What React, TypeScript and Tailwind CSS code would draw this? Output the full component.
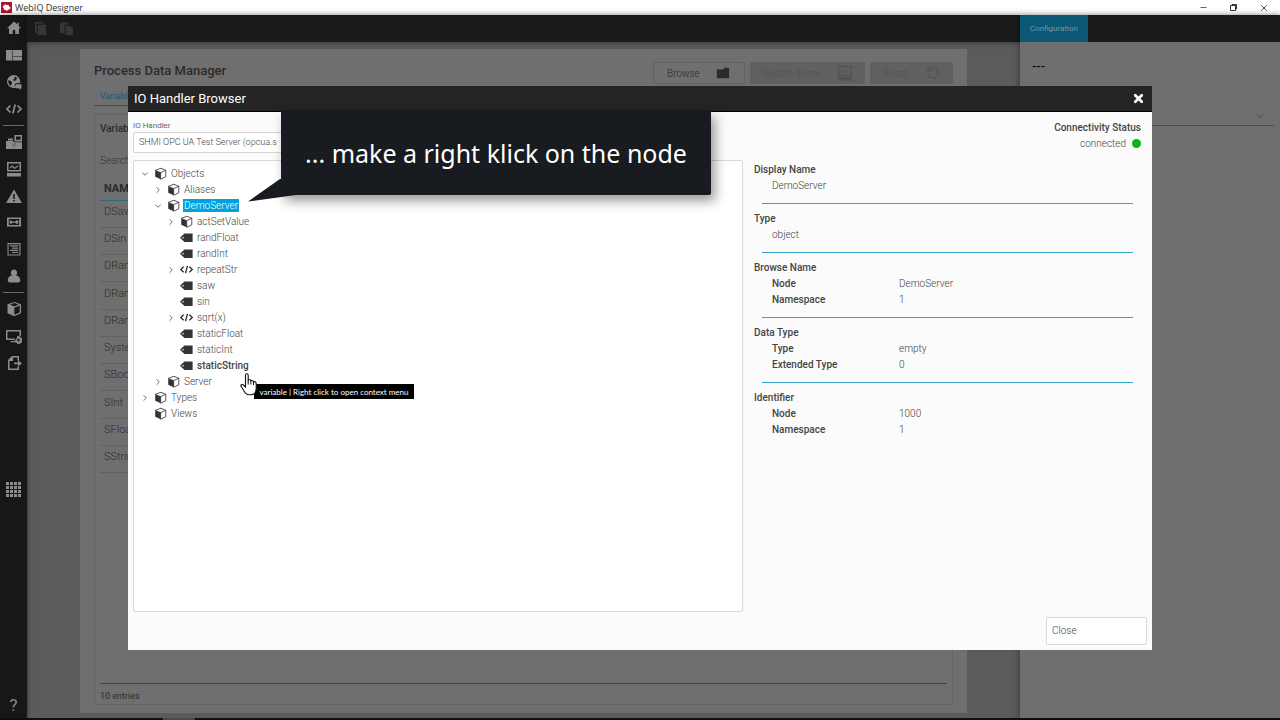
import React from 'react';
import { ChevronDown, ChevronRight, Minus, RotateCcw, X } from 'lucide-react';

type NodeKind = 'object' | 'variable' | 'method';

interface TreeNode {
  name: string;
  level: number;
  kind: NodeKind;
  state?: 'open' | 'closed';
}

const nodes: TreeNode[] = [
  { name: 'Objects', level: 0, kind: 'object', state: 'open' },
  { name: 'Aliases', level: 1, kind: 'object', state: 'closed' },
  { name: 'DemoServer', level: 1, kind: 'object', state: 'open' },
  { name: 'actSetValue', level: 2, kind: 'object', state: 'closed' },
  { name: 'randFloat', level: 2, kind: 'variable' },
  { name: 'randInt', level: 2, kind: 'variable' },
  { name: 'repeatStr', level: 2, kind: 'method', state: 'closed' },
  { name: 'saw', level: 2, kind: 'variable' },
  { name: 'sin', level: 2, kind: 'variable' },
  { name: 'sqrt(x)', level: 2, kind: 'method', state: 'closed' },
  { name: 'staticFloat', level: 2, kind: 'variable' },
  { name: 'staticInt', level: 2, kind: 'variable' },
  { name: 'staticString', level: 2, kind: 'variable' },
  { name: 'Server', level: 1, kind: 'object', state: 'closed' },
  { name: 'Types', level: 0, kind: 'object', state: 'closed' },
  { name: 'Views', level: 0, kind: 'object' },
];

const items = ['DSaw', 'DSin', 'DRandInt', 'DRandFloat', 'DRandBool', 'SystemTime', 'SBool', 'SInt', 'SFloat', 'SString'];

const details = [
  { title: 'Browse Name', rows: [['Node', 'DemoServer'], ['Namespace', '1']] },
  { title: 'Data Type', rows: [['Type', 'empty'], ['Extended Type', '0']] },
  { title: 'Identifier', rows: [['Node', '1000'], ['Namespace', '1']] },
];

const Icon = ({ children, className = 'size-4' }: { children: React.ReactNode; className?: string }) => (
  <svg viewBox="0 0 16 16" fill="currentColor" className={className} aria-hidden="true">{children}</svg>
);

const codeIcon = (
  <g fill="none" stroke="currentColor" strokeWidth="1.7">
    <path d="M4.5 4.5 1 8l3.5 3.5M11.5 4.5 15 8l-3.5 3.5M9.2 3.5 6.8 12.5" />
  </g>
);

const designerIcons: [string, React.ReactNode][] = [
  ['Home', <path d="M8 1.5 1 8.2h2V14h3.8v-4h2.4v4H13V8.2h2l-2.2-2.1V2.8h-1.6v1.8z" />],
  ['Layout', <path fillRule="evenodd" d="M0 3h16v10.500H0zM6.300 3v10.500h.5V9.400H16v-.5H6.800V3z" />],
  ['Localization', (
    <>
      <path fillRule="evenodd" d="M7.500 1a6.500 6.500 0 1 0 2.800 12.400l-2-2.400 1.500-1.800 4.200-.2A6.500 6.500 0 0 0 7.500 1zM8 2.300l3 1.400-.8 2.300-2.100 1.200-1-1.500L9 4.300zM2.200 6.200l3.200 1 .7 2.100-1.500 2.400C3 11 2 8.500 2.200 6.200z" />
      <path d="M9.500 10.200h6v4h-1.300l1 1.800-3-1.800H9.500z" />
    </>
  )],
  ['Scripts', codeIcon],
];

const dataIcons: [string, React.ReactNode][] = [
  ['Process data', (
    <>
      <path fillRule="evenodd" d="M8.500 1H16v6.500H8.500zM10 2.500v3.300h4.500V2.500z" />
      <path d="M2 4.500h5v2H2zM0 7h7.500v1.200H16V15H0z" />
      <path d="M6.500 9v1.200c0 .8.600 1.300 1.500 1.300s1.500-.5 1.500-1.300V9M8 11.500v2" fill="none" stroke="#555" strokeWidth=".8" />
    </>
  )],
  ['Trends', <path fillRule="evenodd" d="M1 1h14v9.500H1zM2.500 2.500V9h11V2.500zM1 12h14v3.500H1zM3.500 6.800 6.200 4.300l2.600 2.200 3.200-2.300.6 1L8.700 8 6.200 5.900 4.300 7.600z" />],
  ['Alarms', <path fillRule="evenodd" d="M8 1.500 16 15H0zM7.200 6v5h1.600V6zM7.200 12v1.500h1.600V12z" />],
  ['Recorder', <path fillRule="evenodd" d="M1 3.500h14v9H1zM2.800 5v6h10.400V5zM5 6.500a1.600 1.600 0 0 1 1.500 1h3a1.600 1.600 0 1 1 0 1.200h-3A1.600 1.600 0 1 1 5 6.500z" />],
  ['Recipes', <path fillRule="evenodd" d="M1.500 2h13v12.500h-13zM2.600 3.200v10.200h10.800V3.200zM4 4.300h8.200v1.200H4zM6 6.500h6.200v1.200H6zM4 8.700h8.200v1.200H4zM6 10.900h6.200v1.200H6z" />],
  ['Users', <path d="M8 1.500a3.200 3.200 0 0 1 2 5.700c2.500.5 4.300 2.500 4.300 4.800 0 1.500-.8 2.500-2.300 2.500H4c-1.500 0-2.300-1-2.300-2.500 0-2.300 1.800-4.300 4.300-4.800a3.200 3.200 0 0 1 2-5.700z" />],
];

const projectIcons: [string, React.ReactNode][] = [
  ['Packages', <path fillRule="evenodd" d="M8.500 1 15 3.300v9L8.300 15.200 1.500 12.300v-9zM8.300 6.800v7l5.400-2.400V4.400zM8.400 2 4 3.600l4.300 1.800 4.200-1.900z" />],
  ['Display settings', (
    <>
      <path fillRule="evenodd" d="M0 2h15v6.500h-1.500v-5h-12v7H9V12H0zM5 13h4v1.300H4z" />
      <path fillRule="evenodd" d="M11.500 8h2v1.300l1.500.7 1-.5v5l-1.300.5-1.200 1h-2l-.8-1.300-1.700-.5v-2l1.200-.7zM12.500 10.800a1.300 1.300 0 1 0 0 2.600 1.300 1.300 0 0 0 0-2.600z" />
    </>
  )],
  ['Export', <path fillRule="evenodd" d="M6 1h7v4.500h-1.500v-3H7V6H3.500v7.500h8v-2H13V15H2V5zM8 7.500h4V5.300L16 8.500 12 11.500V9.300H8z" />],
];

const SideGroup = ({ icons, className }: { icons: [string, React.ReactNode][]; className: string }) => (
  <div className={`flex flex-col ${className}`}>
    {icons.map(([label, shape]) => (
      <button key={label} aria-label={label} className="flex flex-1 items-center justify-center">
        <Icon>{shape}</Icon>
      </button>
    ))}
  </div>
);

const KindIcon = ({ kind }: { kind: NodeKind }) => {
  if (kind === 'method') return <Icon className="size-[13px]">{codeIcon}</Icon>;
  if (kind === 'variable') {
    return (
      <Icon className="size-[13px]">
        <path fillRule="evenodd" d="M5.500 3H15.500v10.500H5.500L0 8.200zM3.700 7.300a1 1 0 1 0 0 2 1 1 0 0 0 0-2z" />
      </Icon>
    );
  }
  return (
    <Icon className="size-[13px]">
      <path d="M1.500 4.300 8.200 7v8L1.500 12z" />
      <path d="M1.500 4.200 8.500 1.500 14.500 4v8L8.200 15V7zM8.200 7l6.300-3" fill="none" stroke="currentColor" strokeWidth="1" />
    </Icon>
  );
};

const TreeRow = ({ node }: { node: TreeNode }) => {
  const selected = node.name === 'DemoServer';
  const hovered = node.name === 'staticString';
  return (
    <li role="treeitem" aria-selected={selected} className="flex h-4 items-center" style={{ paddingLeft: node.level * 13 }}>
      <span className="flex w-3 justify-center text-[#555]">
        {node.state === 'open' && <ChevronDown size={10} />}
        {node.state === 'closed' && <ChevronRight size={10} />}
      </span>
      <span className="mx-[3px] text-[#333]"><KindIcon kind={node.kind} /></span>
      <button
        className={`px-px leading-[13px] ${selected ? 'bg-[#00a2e0] text-white' : hovered ? 'font-medium text-[#444]' : 'text-[#444]'}`}
      >
        {node.name}
      </button>
    </li>
  );
};

const Background = () => (
  <div className="flex min-h-0 flex-1 text-[#2b2b2b]">
    <nav className="relative z-10 flex w-[27px] flex-col bg-[#171717] text-[#8c8c8c] shadow-[0_0_5px_rgba(0,0,0,0.5)]">
      <SideGroup icons={designerIcons} className="h-[107px]" />
      <hr className="mx-[3px] my-[3px] border-[#6a6a6a]" />
      <SideGroup icons={dataIcons} className="h-40" />
      <hr className="mx-[3px] my-[3px] border-[#6a6a6a]" />
      <SideGroup icons={projectIcons} className="h-20" />
      <div className="flex flex-1 flex-col items-center justify-between pb-1 pt-[106px]">
        <button aria-label="Apps" className="grid grid-cols-4 gap-px">
          {Array.from({ length: 16 }, (_, i) => <span key={i} className="size-[3px] bg-current" />)}
        </button>
        <button aria-label="Help" className="text-[17px] leading-[18px]">?</button>
      </div>
    </nav>

    <div className="flex min-w-0 flex-1 flex-col">
      <div className="relative z-10 flex h-[27px] items-center gap-[11px] bg-[#1a1a1a] pl-[6px] text-[#363636] shadow-[0_0_6px_rgba(0,0,0,0.5)]">
        <button aria-label="Copy"><Icon className="size-[15px]"><path d="M2 1h9v2H4v10H2zM5 4h9v11H5z" /></Icon></button>
        <button aria-label="Paste"><Icon className="size-[15px]"><path d="M1 2h2l1-1h3l1 1h2v2H6v9H1zM7 5h5l3 3v7H7z" /></Icon></button>
      </div>
      <main className="flex min-h-0 flex-1 flex-col bg-[#5b5b5b] px-[53px] pb-[5px] pt-[7px]">
        <section className="flex flex-1 flex-col bg-[#6f6f6f] px-[14px] pb-2 pt-[13px]">
          <div className="flex items-start justify-between">
            <h1 className="text-[13px] font-medium leading-[17px]">Process Data Manager</h1>
            <div className="flex gap-[5px] text-[10px] font-light">
              <button className="flex h-[22px] w-[92px] items-center justify-between rounded-xs border border-[#626262] pl-[13px] pr-[14px]">
                Browse
                <Icon className="size-[14px]"><path d="M1 4h7l1.500-2H15v12H1z" /></Icon>
              </button>
              <button disabled className="flex h-[22px] w-[115px] items-center justify-between rounded-xs bg-[#606060] px-3 text-[#515151]">
                Update items
                <Icon><path fillRule="evenodd" d="M1 1h14v10H1zM2.200 2.200v7.600h11.600V2.200zM1 12h14v3.500H1zM4 4l4 3 4-3v1.200L8 8.300 4 5.200z" /></Icon>
              </button>
              <button disabled className="flex h-[22px] w-[83px] items-center justify-between rounded-xs bg-[#606060] px-[13px] text-[#515151]">
                Reset
                <RotateCcw size={14} />
              </button>
            </div>
          </div>
          <div className="mt-[6px] flex">
            <button className="border-b border-[#0c5f80] px-[6px] pb-[2px] text-[9px] leading-[13px] text-[#16587a]">Variables</button>
          </div>
          <div className="mt-2 flex flex-1 flex-col border border-[#646464] px-[5px]">
            <h2 className="pt-2 text-[10px] font-medium leading-3">Variables</h2>
            <input aria-label="Search" placeholder="Search" className="mt-[17px] h-4 text-[10px] font-light placeholder:text-[#333]" />
            <table className="mt-[10px] h-[295px] text-left text-[11px]">
              <thead>
                <tr className="h-[22px] border-b border-[#2d6b85]"><th className="pl-1 font-bold">NAME</th></tr>
              </thead>
              <tbody>
                {items.map((item) => (
                  <tr key={item} className="border-b border-[#626262]"><td className="pb-[3px] pl-1 font-light">{item}</td></tr>
                ))}
              </tbody>
            </table>
            <p className="mt-auto border-t border-[#444] pt-1 text-[9px] leading-4">10 entries</p>
          </div>
        </section>
      </main>
    </div>

    <aside className="relative z-10 flex w-[260px] flex-col shadow-[0_0_6px_rgba(0,0,0,0.5)]">
      <div className="flex h-[27px] bg-[#1a1a1a]">
        <button className="bg-[#0a5876] px-[10px] text-[8px] text-[#6f98a8]">Configuration</button>
      </div>
      <div className="flex-1 bg-[#6f6f6f] pl-3 pr-[6px] pt-4">
        <p className="font-['Liberation_Sans',sans-serif] text-[13px] leading-4 text-black">---</p>
        <button aria-label="Expand" className="mt-[33px] flex h-[19px] w-full items-center justify-end border-b border-[#1c5d79] pr-2 text-[#1c5670]">
          <ChevronDown size={12} />
        </button>
      </div>
    </aside>
  </div>
);

const Callout = () => (
  <div className="absolute left-[281px] top-[110px] flex h-[85px] w-[430px] items-center justify-center rounded-b-xs bg-[#181c20] pt-[2px] font-['Noto_Sans',sans-serif] text-[25px] text-white shadow-[4px_6px_12px_rgba(0,0,0,0.4)]">
    ... make a right klick on the node
    <svg viewBox="0 0 48 24" className="absolute right-[415px] top-[69px] h-6 w-12 text-[#181c20]" aria-hidden="true">
      <path d="M32 0 0 22.500 48 16V0z" fill="currentColor" />
    </svg>
  </div>
);

const BrowserDialog = () => (
  <div role="dialog" aria-labelledby="dialog-title" className="flex h-4/5 w-4/5 flex-col bg-[#fbfbfb] text-[10px] font-light text-[#444]">
    <header className="flex h-[26px] items-center justify-between border-b border-black bg-[#242424] pl-[6px] pr-[7px] pt-px text-white">
      <h2 id="dialog-title" className="text-[13px] font-normal">IO Handler Browser</h2>
      <button aria-label="Close dialog"><X size={13} strokeWidth={5} /></button>
    </header>
    <div className="grid min-h-0 flex-1 grid-cols-[1fr_393px] gap-[11px] px-[5px] pb-[5px]">
      <div className="flex flex-col pt-2">
        <label htmlFor="handler" className="text-[8px] font-normal leading-[12px] text-[#666]">IO Handler</label>
        <select id="handler" className="h-[21px] w-[570px] appearance-none rounded-xs border border-[#d4d4d4] bg-white px-[5px] pt-px text-[9px] font-light">
          <option>SHMI OPC UA Test Server (opcua.s</option>
        </select>
        <ul role="tree" className="mt-[7px] flex-1 rounded-xs border border-[#d8d8d8] bg-white px-[5px] pt-[5px]">
          {nodes.map((node) => <TreeRow key={node.name} node={node} />)}
        </ul>
      </div>
      <div className="pt-2 leading-4">
        <div className="pr-[6px] text-right">
          <p className="font-medium">Connectivity Status</p>
          <p className="flex items-center justify-end gap-[6px]">
            connected
            <span className="size-[9px] rounded-full bg-[#09b609]" />
          </p>
        </div>
        <dl className="pt-[10px]">
          <dt className="font-medium">Display Name</dt>
          <dd className="pl-[18px]">DemoServer</dd>
          <hr className="mb-[7px] ml-2 mr-[14px] mt-[9px] border-[#31a5cb]" />
          <dt className="font-medium">Type</dt>
          <dd className="pl-[18px]">object</dd>
        </dl>
        {details.map((group) => (
          <section key={group.title}>
            <hr className="mb-[7px] ml-2 mr-[14px] mt-[9px] border-[#31a5cb]" />
            <h3 className="font-medium">{group.title}</h3>
            <dl className="grid grid-cols-[127px_1fr] pl-[18px]">
              {group.rows.map(([key, value]) => (
                <React.Fragment key={key}>
                  <dt className="font-medium">{key}</dt>
                  <dd>{value}</dd>
                </React.Fragment>
              ))}
            </dl>
          </section>
        ))}
      </div>
    </div>
    <footer className="flex justify-end pb-[5px] pr-[5px]">
      <button className="h-7 w-[101px] rounded-xs border border-[#d8d8d8] bg-white pl-[5px] text-left">Close</button>
    </footer>
  </div>
);

export default function App() {
  return (
    <div className="relative flex h-screen flex-col overflow-hidden bg-white font-['Roboto',sans-serif]">
      <header className="flex h-[15px] items-center justify-between bg-white pl-[1px] pr-[11px] font-['Open_Sans',sans-serif] text-[9px] text-[#333]">
        <span className="flex items-center gap-[3px]">
          <svg viewBox="0 0 11 11" className="size-[11px]" aria-hidden="true">
            <path d="M0 0h11v11H0z" fill="#b3122c" />
            <path d="M1.500 4.800 3.500 3l1-.8 1 .8h2l.7 1.500L9.800 6 8.300 7.500 7 7.800 6 9 4.500 8 3 7.500 2.600 6z" fill="#fff" />
          </svg>
          WebIQ Designer
        </span>
        <span className="flex items-center gap-[21px]">
          <button aria-label="Minimize"><Minus size={9} strokeWidth={2} /></button>
          <button aria-label="Restore">
            <svg viewBox="0 0 9 9" className="size-[9px]" fill="none" stroke="currentColor" aria-hidden="true">
              <path d="M1.500 2.500h5v5h-5zM3 2.500V1.500h4.500V6H6.500" />
            </svg>
          </button>
          <button aria-label="Close window"><X size={10} strokeWidth={2} /></button>
        </span>
      </header>

      <div className="relative flex min-h-0 flex-1 flex-col">
        <Background />
        <div className="flex h-[2px] bg-[#101010]"><span className="ml-[163px] w-8 bg-[#4a4a4a]" /></div>
        <div className="absolute inset-0 z-20 flex items-center justify-center">
          <BrowserDialog />
        </div>
      </div>

      <div className="absolute inset-0 z-30">
        <Callout />
        <div role="tooltip" className="absolute left-[254px] top-[384px] flex h-[15px] w-[160px] items-center justify-center whitespace-nowrap bg-black font-['Lato',sans-serif] text-[8px] text-white">
          variable | Right click to open context menu
        </div>
        <svg viewBox="0 0 18 23" className="absolute left-[240px] top-[373px] h-[23px] w-[18px]" aria-hidden="true">
          <path d="M5.500 14V2.300c0-2 2.700-2 2.700 0V7c1.600-.6 2.400-.2 2.700.8 1.400-.6 2.300-.1 2.600.9 1.600-.4 2.700.4 2.700 2v4.500c0 3.500-1.700 6.500-5.200 6.500H9c-2.500 0-3.700-1.300-4.800-3.500l-3-4.700c-1-1.600.8-2.700 2.200-1.500z" fill="#fff" stroke="#111" strokeWidth="1.100" />
          <path d="M8.200 7v4.500M10.900 8v3.500M13.500 9v3" fill="none" stroke="#111" strokeWidth="1" />
        </svg>
      </div>
    </div>
  );
}
